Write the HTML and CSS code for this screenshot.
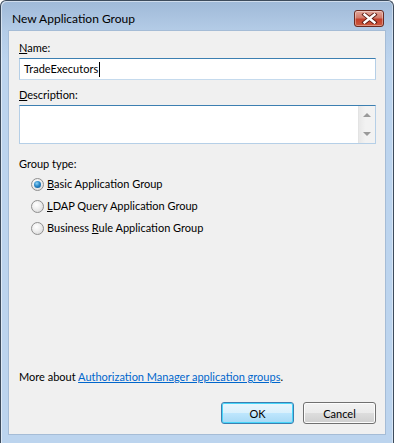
FILE: index.html
```html
<!DOCTYPE html>
<html>
<head>
<meta charset="utf-8">
<link rel="stylesheet" href="styles.css">
</head>
<body>
<div class="window">
  <div class="titlebar">
    <span class="title">New Application Group</span>
    <button class="close" aria-label="Close">
      <svg width="17" height="11" viewBox="0 0 17 11">
        <path d="M3.5 1.5 L13.5 9.5 M13.5 1.5 L3.5 9.5" stroke="#5a1a12" stroke-width="4.2" stroke-linecap="square" fill="none"/>
        <path d="M3.5 1.5 L13.5 9.5 M13.5 1.5 L3.5 9.5" stroke="#ffffff" stroke-width="2.4" stroke-linecap="square" fill="none"/>
      </svg>
    </button>
  </div>
  <div class="client">
    <div class="label"><u>N</u>ame:</div>
    <div class="input"><span>TradeExecutors</span><span class="caret"></span></div>
    <div class="label gap"><u>D</u>escription:</div>
    <div class="textarea">
      <div class="scrollbar">
        <span class="arrow up"></span>
        <span class="arrow down"></span>
      </div>
    </div>
    <div class="label group">Group type:</div>
    <div class="radios">
      <div class="radio-row"><span class="radio checked"><span class="dot"></span></span><span><u>B</u>asic Application Group</span></div>
      <div class="radio-row"><span class="radio"></span><span><u>L</u>DAP Query Application Group</span></div>
      <div class="radio-row"><span class="radio"></span><span>Business <u>R</u>ule Application Group</span></div>
    </div>
    <div class="spacer"></div>
    <div class="more">More about <a class="link" href="#">Authorization Manager application groups</a>.</div>
    <div class="buttons">
      <button class="btn default">OK</button>
      <button class="btn">Cancel</button>
    </div>
  </div>
</div>
</body>
</html>
```
FILE: styles.css
```css
html, body {
  margin: 0;
  padding: 0;
  background: #ffffff;
}
body {
  width: 394px;
  height: 443px;
  overflow: hidden;
  font-family: Lato, "Noto Sans", sans-serif;
  font-size: 11px;
  color: #000;
}
.window {
  box-sizing: border-box;
  width: 394px;
  height: 443px;
  border: 1px solid #3d4b5c;
  border-bottom: none;
  border-radius: 6px 6px 0 0;
  background: linear-gradient(to bottom, #9fb9d8 0px, #b4cce7 30px, #bcd4ee 60px, #bcd4ee 100%);
  padding: 0 7px 8px 7px;
  display: flex;
  flex-direction: column;
  box-shadow: inset 1px 1px 0 rgba(255,255,255,0.5), inset -1px 0 0 rgba(255,255,255,0.4);
}
.titlebar {
  height: 29px;
  display: flex;
  align-items: flex-start;
  justify-content: space-between;
}
.title {
  margin-top: 10px;
  margin-left: 4px;
  line-height: 16px;
  font-size: 12px;
}
.close {
  margin-top: 9px;
  margin-right: 2px;
  width: 30px;
  height: 17px;
  padding: 0;
  border: 1px solid #6b2a20;
  border-radius: 3px;
  background: linear-gradient(to bottom, #e2a89c 0%, #d17a6a 45%, #c4402c 55%, #cb5a3f 100%);
  box-shadow: inset 0 0 0 1px rgba(255,255,255,0.35);
  display: flex;
  align-items: center;
  justify-content: center;
}
.client {
  flex: 1;
  box-sizing: border-box;
  background: #f0f0f0;
  border: 1px solid #a5bcd6;
  padding: 9px 9px 10px 10px;
  display: flex;
  flex-direction: column;
}
.label {
  line-height: 16px;
  height: 16px;
}
.label.gap {
  margin-top: 7px;
}
.label.group {
  margin-top: 12px;
}
.input {
  margin-top: 2px;
  box-sizing: border-box;
  height: 22px;
  background: #fff;
  border: 1px solid #b5cfe7;
  border-top-color: #3c7fb1;
  border-bottom-color: #c5daed;
  padding: 0 0 0 4px;
  display: flex;
  align-items: center;
  line-height: 16px;
}
.caret {
  display: inline-block;
  width: 1px;
  height: 15px;
  background: #000;
  margin-left: 1px;
}
.textarea {
  margin-top: 2px;
  box-sizing: border-box;
  height: 39px;
  background: #fff;
  border: 1px solid #b5cfe7;
  border-top-color: #3c7fb1;
  display: flex;
  justify-content: flex-end;
}
.scrollbar {
  width: 17px;
  background: linear-gradient(to right, #e8e8e8, #f2f2f2 40%, #f2f2f2);
  border-left: 1px solid #e3e3e3;
  display: flex;
  flex-direction: column;
  justify-content: space-between;
  align-items: center;
  padding: 7px 0 7px 0;
  box-sizing: border-box;
}
.arrow {
  width: 0;
  height: 0;
  border-left: 4px solid transparent;
  border-right: 4px solid transparent;
}
.arrow.up {
  border-bottom: 4px solid #9a9a9a;
}
.arrow.down {
  border-top: 4px solid #9a9a9a;
}
.radios {
  margin-top: 1px;
  padding-left: 12px;
  display: flex;
  flex-direction: column;
}
.radio-row {
  height: 22px;
  display: flex;
  align-items: center;
  gap: 3px;
  line-height: 16px;
}
.radio {
  box-sizing: border-box;
  width: 13px;
  height: 13px;
  border-radius: 50%;
  border: 1px solid #8f8f8f;
  background: radial-gradient(circle at 40% 35%, #ffffff 0%, #f0f0f0 40%, #d2d2d2 100%);
  display: flex;
  align-items: center;
  justify-content: center;
}
.dot {
  width: 7px;
  height: 7px;
  border-radius: 50%;
  background: radial-gradient(circle at 40% 35%, #8fd3f5 0%, #2a88c8 45%, #0b4e8a 100%);
}
.spacer {
  flex: 1;
}
.more {
  line-height: 16px;
}
.link {
  color: #0066cc;
  text-decoration: underline;
}
.buttons {
  margin-top: 17px;
  display: flex;
  justify-content: flex-end;
  gap: 9px;
}
.btn {
  box-sizing: border-box;
  width: 73px;
  height: 22px;
  padding: 0;
  font-family: inherit;
  font-size: 11px;
  color: #000;
  border: 1px solid #707070;
  border-radius: 3px;
  background: linear-gradient(to bottom, #f2f2f2 0%, #ebebeb 50%, #dddddd 51%, #cfcfcf 100%);
  box-shadow: inset 0 0 0 1px #fcfcfc;
}
.btn.default {
  border-color: #3c7fb1;
  background: linear-gradient(to bottom, #eaf6fd 0%, #d9f0fc 50%, #bee6fd 51%, #a7d9f5 100%);
  box-shadow: inset 0 0 0 1px #48d6fa;
}
```
